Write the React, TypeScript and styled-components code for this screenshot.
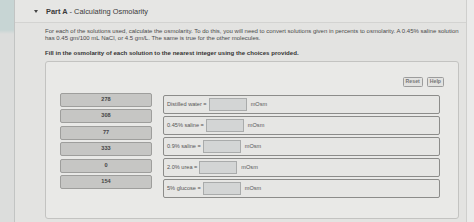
import styled, { createGlobalStyle } from "styled-components"

const Global = createGlobalStyle`
  html, body {
    margin: 0;
    padding: 0;
    background: #e3e3e1;
    font-family: "Liberation Sans", Arial, sans-serif;
    color: #3b3b3b;
  }
`

const Page = styled.div`
  display: flex;
  width: 474px;
  height: 222px;
  overflow: hidden;
  background: #e3e3e1;
`

const SideStrip = styled.div`
  width: 14px;
  flex: none;
  border-right: 1px solid #c2c4c3;
  background: linear-gradient(#c7d5d4 0, #c7d5d4 30px, #dcdddc 34px, #dcdddc 100%);
`

const Main = styled.div`
  width: 451px;
  flex: none;
  border-right: 1px solid #cfcfcd;
  display: flex;
  flex-direction: column;
`

const RightStrip = styled.div`
  flex: 1;
  background: #ebebea;
`

const Header = styled.div`
  height: 22px;
  border-bottom: 1px solid #d3d3d1;
  background: #e6e6e4;
  display: flex;
  align-items: center;
  padding-left: 19px;
  gap: 8px;
  font-size: 7.4px;
  color: #3a3a3a;

  b {
    font-weight: 700;
  }
`

const Caret = styled.span`
  width: 0;
  height: 0;
  border-left: 2.5px solid transparent;
  border-right: 2.5px solid transparent;
  border-top: 3px solid #444;
`

const Body = styled.div`
  padding: 5px 4px 0 30px;
`

const Para = styled.p`
  margin: 0;
  font-size: 6px;
  line-height: 7.4px;
  color: #4a4a4a;
  white-space: nowrap;
`

const Instruction = styled.p`
  margin: 6px 0 0;
  font-size: 6.1px;
  font-weight: 700;
  color: #333;
`

const Box = styled.div`
  margin-top: 5px;
  width: 414px;
  height: 158px;
  box-sizing: border-box;
  border: 1px solid #c3c3c1;
  border-radius: 3px;
  background: #e9e9e7;
  padding: 15px 14px 0 14px;
`

const Toolbar = styled.div`
  display: flex;
  justify-content: flex-end;
  gap: 4px;
`

const SmallButton = styled.button`
  height: 10px;
  padding: 0 2px;
  border: 1px solid #9c9c9c;
  border-radius: 1.5px;
  background: #e2e2e0;
  font-family: inherit;
  font-size: 5.2px;
  font-weight: 700;
  color: #777;
  line-height: 1;
`

const Workspace = styled.div`
  margin-top: 6px;
  display: flex;
  gap: 11px;
  align-items: flex-start;
`

const Tiles = styled.div`
  width: 92px;
  display: flex;
  flex-direction: column;
  gap: 2.5px;
`

const Tile = styled.div`
  height: 14px;
  box-sizing: border-box;
  border: 1px solid #9e9e9c;
  border-radius: 2px;
  background: #c6c6c4;
  display: flex;
  justify-content: center;
  padding-top: 2px;
  font-size: 5.6px;
  font-weight: 700;
  color: #444;
`

const Rows = styled.div`
  margin-top: 2px;
  width: 277px;
  display: flex;
  flex-direction: column;
  gap: 2px;
`

const Row = styled.div`
  height: 19px;
  box-sizing: border-box;
  border: 1px solid #8c8c8a;
  border-radius: 2px;
  background: #e6e6e4;
  display: flex;
  align-items: center;
  padding-left: 3px;
  font-size: 5.6px;
  color: #555;
`

const Field = styled.div`
  width: 38px;
  height: 13px;
  margin-left: 2px;
  box-sizing: border-box;
  border: 1px solid #a9abab;
  background: #d3d5d5;
`

const Unit = styled.span`
  margin-left: 4px;
`

const tiles = ["278", "308", "77", "333", "0", "154"]
const rows = ["Distilled water =", "0.45% saline =", "0.9% saline =", "2.0% urea =", "5% glucose ="]

export default function App() {
  return (
    <>
      <Global />
      <Page>
        <SideStrip />
        <Main>
          <Header>
            <Caret />
            <span><b>Part A</b> - Calculating Osmolarity</span>
          </Header>
          <Body>
            <Para>
              For each of the solutions used, calculate the osmolarity. To do this, you will need to convert solutions given in percents to osmolarity. A 0.45% saline solution
              <br />
              has 0.45 gm/100 mL NaCl, or 4.5 gm/L. The same is true for the other molecules.
            </Para>
            <Instruction>
              Fill in the osmolarity of each solution to the nearest integer using the choices provided.
            </Instruction>
            <Box>
              <Toolbar>
                <SmallButton>Reset</SmallButton>
                <SmallButton>Help</SmallButton>
              </Toolbar>
              <Workspace>
                <Tiles>
                  {tiles.map(t => (
                    <Tile key={t}>{t}</Tile>
                  ))}
                </Tiles>
                <Rows>
                  {rows.map(r => (
                    <Row key={r}>
                      <span>{r}</span>
                      <Field />
                      <Unit>mOsm</Unit>
                    </Row>
                  ))}
                </Rows>
              </Workspace>
            </Box>
          </Body>
        </Main>
        <RightStrip />
      </Page>
    </>
  )
}
